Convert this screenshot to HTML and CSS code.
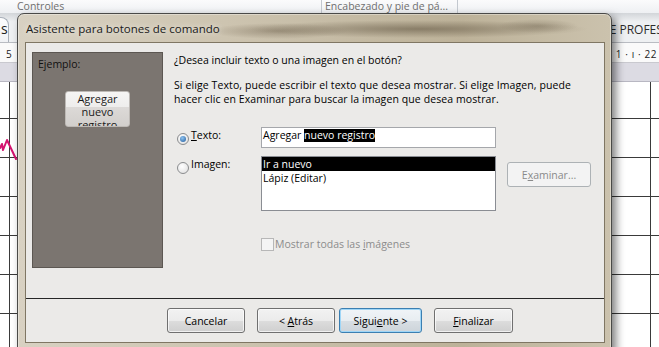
FILE: index.html
```html
<!DOCTYPE html>
<html lang="es">
<head>
    <meta charset="UTF-8">
    <meta name="viewport" content="width=device-width, initial-scale=1.0">
    <title>Asistente para botones de comando</title>
    <link rel="stylesheet" href="styles.css">
</head>
<body>
    <!-- ventana de Access detrás del asistente -->
    <div class="desk">
        <div class="ribbon">
            <div class="group group-controls">Controles</div>
            <div class="group group-header">Encabezado y pie de pá...</div>
        </div>
        <div class="tabstrip">
            <div class="doc-tab">s</div>
            <div class="doc-title">E PROFES</div>
        </div>
        <div class="ruler">
            <span class="ruler-left">5</span>
            <span class="ruler-right">1 · ı · 22</span>
        </div>
        <div class="section-band"></div>
        <div class="grid">
            <svg class="pen-mark" width="18" height="24" viewBox="0 0 18 24">
                <polyline points="0,10 2,6 3,12 7,2 16,21" fill="none" stroke="#d4136f" stroke-width="2" stroke-linejoin="round" stroke-linecap="round"/>
            </svg>
        </div>
    </div>

    <div class="wizard">
        <div class="titlebar">Asistente para botones de comando</div>
        <div class="client">
            <div class="wizard-body">
                <div class="sample">
                    <div class="sample-caption">Ejemplo:</div>
                    <div class="sample-button">Agregar nuevo registro</div>
                </div>

                <div class="options">
                    <p class="question">¿Desea incluir texto o una imagen en el botón?</p>
                    <p class="hint">Si elige Texto, puede escribir el texto que desea mostrar. Si elige Imagen, puede<br>hacer clic en Examinar para buscar la imagen que desea mostrar.</p>

                    <div class="choice choice-text">
                        <div class="choice-label"><span class="radio checked"></span><span><u>T</u>exto:</span></div>
                        <div class="textbox">Agregar <span class="selected">nuevo registro</span></div>
                    </div>

                    <div class="choice choice-image">
                        <div class="choice-label"><span class="radio"></span><span>Ima<u>g</u>en:</span></div>
                        <ul class="listbox">
                            <li class="active">Ir a nuevo</li>
                            <li>Lápiz (Editar)</li>
                        </ul>
                        <button class="btn btn-browse" disabled>E<u>x</u>aminar...</button>
                    </div>

                    <div class="show-all"><span class="checkbox"></span><span>Mostrar todas las <u>i</u>mágenes</span></div>
                </div>
            </div>

            <div class="separator"></div>

            <div class="actions">
                <button class="btn btn-cancel">Cancelar</button>
                <button class="btn btn-back">&lt; <u>A</u>trás</button>
                <button class="btn btn-next">Sigui<u>e</u>nte &gt;</button>
                <button class="btn btn-finish"><u>F</u>inalizar</button>
            </div>
        </div>
    </div>
</body>
</html>
```

FILE: styles.css
```css
* {
    box-sizing: border-box;
}

body {
    margin: 0;
    width: 659px;
    height: 347px;
    overflow: hidden;
    position: relative;
    font-family: "Open Sans", "Noto Sans", sans-serif;
    font-size: 10.5px;
    color: #000;
    background: #fff;
}

u {
    text-decoration: underline;
    text-underline-offset: 1px;
}

/* ---- fondo: Access ---- */

.desk {
    display: flex;
    flex-direction: column;
    height: 347px;
}

.ribbon {
    height: 13px;
    display: flex;
    background: linear-gradient(#fbfbfc, #eef0f3);
    color: #6f6f6f;
    font-size: 10.5px;
    line-height: 13px;
}

.group {
    border-right: 1px solid #c3c8cf;
}

.group-controls {
    width: 322px;
    padding-left: 17px;
}

.group-header {
    width: 136px;
    padding-left: 3px;
}

.tabstrip {
    height: 30px;
    display: flex;
    align-items: flex-end;
    background: linear-gradient(#d2d5d9, #eef0f2 30%, #eef0f2);
    border-bottom: 1px solid #b9bcc2;
}

.doc-tab {
    width: 16px;
    height: 25px;
    padding: 2px 0 0 1px;
    background: linear-gradient(#fdfdfd, #f0f2f5);
    border: 1px solid #a9b0ba;
    border-left: 0;
    border-bottom: 0;
    border-radius: 0 8px 0 0;
    font-size: 14px;
    line-height: 18px;
    color: #222;
}

.doc-title {
    margin-left: 601px;
    align-self: center;
    white-space: nowrap;
    font-size: 12px;
    color: #2c2c2c;
    padding-top: 3px;
}

.ruler {
    height: 20px;
    display: flex;
    align-items: center;
    background: #fafafa;
    border-bottom: 1px solid #c9c9cf;
    font-size: 10px;
    color: #222;
}

.ruler-left {
    margin-left: 6px;
    padding-top: 2px;
}

.ruler-right {
    margin-left: 604px;
    padding-top: 2px;
    white-space: nowrap;
    letter-spacing: 0.6px;
}

.section-band {
    height: 19px;
    background: #dcdbe3;
    border-bottom: 1px solid #b8b7c2;
}

.grid {
    flex: 1;
    position: relative;
    background-color: #fff;
    background-image:
        linear-gradient(90deg, transparent 9px, #3a3a3a 9px, #3a3a3a 10px, transparent 10px, transparent 650px, #3a3a3a 650px, #3a3a3a 651px, transparent 651px),
        linear-gradient(transparent 38px, #3a3a3a 38px);
    background-size: 100% 100%, 100% 39px;
    background-position: 0 0, 0 -2px;
}

.pen-mark {
    position: absolute;
    left: 0;
    top: 56px;
}

/* ---- ventana del asistente ---- */

.wizard {
    position: absolute;
    left: 17px;
    top: 13px;
    width: 595px;
    height: 338px;
    display: flex;
    flex-direction: column;
    padding: 0 6px 7px 7px;
    border: 1px solid #4a4a48;
    border-radius: 7px 7px 0 0;
    background:
        radial-gradient(ellipse 170px 9px at 400px 15px, rgba(100, 88, 68, 0.6), transparent),
        radial-gradient(ellipse 70px 8px at 260px 17px, rgba(115, 102, 82, 0.5), transparent),
        radial-gradient(ellipse 40px 7px at 520px 12px, rgba(120, 108, 88, 0.45), transparent),
        linear-gradient(90deg, #d8d1c2, #cdc4b0 35%, #bdb299 75%, #cbc2ad);
    box-shadow: 4px 4px 8px 0 rgba(0, 0, 0, 0.5), inset 0 0 0 1px rgba(255, 255, 255, 0.35);
}

.titlebar {
    height: 28px;
    line-height: 29px;
    padding-left: 1px;
    font-size: 11.5px;
    color: #1a1a1a;
    white-space: nowrap;
    text-shadow: 0 0 6px rgba(255, 255, 255, 0.8);
}

.client {
    flex: 1;
    background: #ebeae8;
    border: 1px solid #7f7663;
}

.wizard-body {
    height: 255px;
    display: flex;
    padding: 9px 0 0 6px;
}

.sample {
    width: 131px;
    height: 216px;
    padding: 4px 5px;
    background: #7b7570;
    border: 1px solid #5c5752;
}

.sample-caption {
    line-height: 14px;
    color: #111;
}

.sample-button {
    width: 65px;
    height: 36px;
    margin: 20px auto 0;
    overflow: hidden;
    text-align: center;
    line-height: 13px;
    font-size: 11px;
    color: #1a1a1a;
    border: 1px solid #bdb9b5;
    border-radius: 3px;
    background: linear-gradient(#f6f5f4, #eeedec 45%, #dcd9d7 45%, #d2cfcc);
}

.options {
    margin-left: 11px;
    width: 420px;
}

.question {
    margin: 1px 0 0;
    line-height: 14px;
}

.hint {
    margin: 11px 0 0;
    line-height: 14px;
    white-space: nowrap;
    letter-spacing: 0.1px;
}

.choice {
    display: flex;
    align-items: flex-start;
}

.choice-text {
    margin-top: 21px;
}

.choice-image {
    margin-top: 8px;
}

.choice-label {
    width: 87px;
    display: flex;
    gap: 2px;
    padding-left: 3px;
    line-height: 14px;
    padding-top: 1px;
}

.radio {
    width: 12px;
    height: 12px;
    margin-top: 5px;
    border-radius: 50%;
    border: 1px solid #8a8c8e;
    background: radial-gradient(circle at 40% 35%, #ffffff, #dcdcdc);
    position: relative;
    flex: none;
}

.radio.checked::after {
    content: "";
    position: absolute;
    left: 2px;
    top: 2px;
    width: 6px;
    height: 6px;
    border-radius: 50%;
    background: radial-gradient(circle at 40% 35%, #8fc4f0, #1f5a9c);
}

.textbox {
    width: 235px;
    height: 21px;
    padding-left: 1px;
    line-height: 14px;
    background: #fff;
    border: 1px solid #a5a7ab;
    white-space: nowrap;
}

.selected {
    display: inline-block;
    line-height: 13px;
    background: #000;
    color: #fff;
}

.listbox {
    list-style: none;
    margin: 0;
    padding: 0;
    width: 235px;
    height: 55px;
    background: #fff;
    border: 1px solid #8a8d93;
}

.listbox li {
    height: 14px;
    line-height: 14px;
    padding-left: 1px;
}

.listbox .active {
    background: #000;
    color: #fff;
}

.btn {
    height: 25px;
    padding: 0;
    font-family: inherit;
    font-size: 10.5px;
    color: #000;
    border: 1px solid #707070;
    border-radius: 3px;
    background: linear-gradient(#f2f2f2, #ebebeb 50%, #dddddd 50%, #cfcfcf);
    box-shadow: inset 0 0 0 1px rgba(255, 255, 255, 0.7);
}

.btn-browse {
    width: 84px;
    margin: 6px 0 0 11px;
    color: #8a8a8a;
    border-color: #adb2b5;
    background: #f3f3f3;
    box-shadow: none;
}

.show-all {
    margin: 27px 0 0 87px;
    display: flex;
    align-items: center;
    gap: 1px;
    line-height: 13px;
    color: #8c8c8c;
}

.checkbox {
    width: 13px;
    height: 13px;
    border: 1px solid #b7b7b7;
    background: #f4f4f4;
}

.separator {
    height: 1px;
    background: #262626;
}

.actions {
    display: flex;
    padding: 9px 0 0 141px;
}

.btn-cancel {
    width: 78px;
}

.btn-back {
    width: 78px;
    margin-left: 12px;
}

.btn-next {
    width: 83px;
    margin-left: 4px;
    border-color: #3c7fb1;
    box-shadow: inset 0 0 0 1px #9fd6f7;
    background: linear-gradient(#f0f4f7, #e8edf1 50%, #d9dfe4 50%, #cdd4da);
}

.btn-finish {
    width: 79px;
    margin-left: 12px;
}
```
